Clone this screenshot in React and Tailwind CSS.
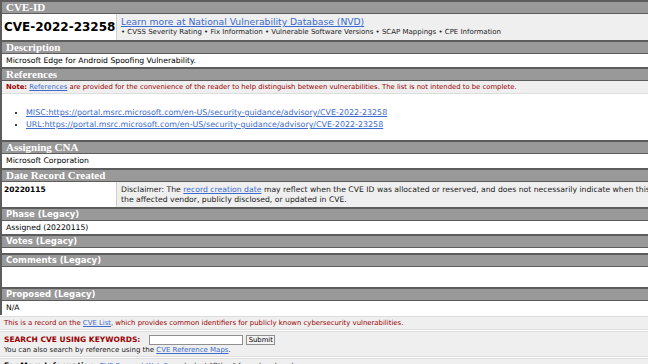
const sans = "font-['DejaVu_Sans',Verdana,sans-serif]";

function Head({ children, serif }) {
  return (
    <div
      className={
        serif
          ? "h-[14px] border-t-2 border-b border-[#5c5c5c] bg-[#999999] pl-[4px] font-['Liberation_Serif',serif] text-[11px] font-bold leading-[11px] text-white"
          : "h-[14px] border-t-2 border-b border-[#5c5c5c] bg-[#999999] pl-[4px] font-['DejaVu_Sans',sans-serif] text-[8.5px] font-bold leading-[11px] text-white"
      }
    >
      {children}
    </div>
  );
}

function Row({ children, className = "" }) {
  return <div className={`bg-white pl-[4px] text-[7.7px] text-black ${className}`}>{children}</div>;
}

function A({ children }) {
  return <span className="text-[#3b6ccd] underline">{children}</span>;
}

export default function App() {
  return (
    <div className={`h-[364px] w-[648px] overflow-hidden bg-white ${sans}`}>
      <div className="w-[900px] border-l-2 border-[#5c5c5c]">
        <Head serif>CVE-ID</Head>
        <div className="flex h-[26px]">
          <div className="flex w-[114px] items-center whitespace-nowrap pl-[2px] text-[12px] font-bold leading-none text-black">
            CVE-2022-23258
          </div>
          <div className="flex-1 border-l border-[#d0d0d0] bg-[#efefef] pl-[4px] pt-[2px]">
            <div className="text-[9.2px] leading-[12px] text-[#3b6ccd] underline">
              Learn more at National Vulnerability Database (NVD)
            </div>
            <div className="text-[7px] leading-[9px] text-[#222]">
              • CVSS Severity Rating • Fix Information • Vulnerable Software Versions • SCAP Mappings • CPE Information
            </div>
          </div>
        </div>

        <Head serif>Description</Head>
        <Row className="h-[13px] leading-[13px]">Microsoft Edge for Android Spoofing Vulnerability.</Row>

        <Head serif>References</Head>
        <div className="h-[13px] border-b border-[#dddddd] bg-[#efefef] pl-[4px] text-[6.85px] leading-[13px] text-[#990000]">
          <b>Note:</b> <A>References</A> are provided for the convenience of the reader to help distinguish between
          vulnerabilities. The list is not intended to be complete.
        </div>
        <div className="h-[46px] bg-white pt-[13px] text-[7.95px] leading-[12px]">
          <ul className="list-disc pl-[24px] marker:text-black">
            <li>
              <A>MISC:https://portal.msrc.microsoft.com/en-US/security-guidance/advisory/CVE-2022-23258</A>
            </li>
            <li>
              <A>URL:https://portal.msrc.microsoft.com/en-US/security-guidance/advisory/CVE-2022-23258</A>
            </li>
          </ul>
        </div>

        <Head serif>Assigning CNA</Head>
        <Row className="h-[14px] leading-[14px]">Microsoft Corporation</Row>

        <Head serif>Date Record Created</Head>
        <div className="flex h-[25px]">
          <div className="w-[114px] pl-[2px] pt-[3px] text-[7.5px] font-bold leading-[10px] text-black">20220115</div>
          <div className="flex-1 whitespace-nowrap border-l border-[#d0d0d0] bg-[#efefef] pl-[4px] pt-[3px] text-[7.7px] leading-[10px] text-[#222]">
            Disclaimer: The <A>record creation date</A> may reflect when the CVE ID was allocated or reserved, and does
            not necessarily indicate when this vulnerability was discovered, shared with
            <br />
            the affected vendor, publicly disclosed, or updated in CVE.
          </div>
        </div>

        <Head>Phase (Legacy)</Head>
        <Row className="h-[13px] leading-[13px]">Assigned (20220115)</Row>

        <Head>Votes (Legacy)</Head>
        <Row className="h-[5px]" />

        <Head>Comments (Legacy)</Head>
        <Row className="h-[20px]" />

        <Head>Proposed (Legacy)</Head>
        <Row className="h-[14px] leading-[14px]">N/A</Row>
      </div>

      <div className="w-[900px]">
        <div className="mt-[1px] h-[14px] border-y border-[#dddddd] bg-[#efefef] pl-[4px] text-[6.9px] leading-[12px] text-[#990000]">
          This is a record on the <A>CVE List</A>, which provides common identifiers for publicly known cybersecurity
          vulnerabilities.
        </div>
        <div className="mt-[1px] h-[26px] border-y border-[#dddddd] bg-[#efefef] pl-[4px] pt-[3px]">
          <div className="flex h-[10px] items-center">
            <span className="text-[7.5px] font-bold text-[#990000]">SEARCH CVE USING KEYWORDS:</span>
            <span className="ml-[9px] h-[10px] w-[94px] border border-[#8f8f8f] bg-white" />
            <span className="ml-[3px] flex h-[10px] w-[29px] items-center justify-center border border-[#8f8f8f] bg-[#f3f3f3] text-[6.8px] text-black">
              Submit
            </span>
          </div>
          <div className="text-[7px] leading-[10px] text-[#222]">
            You can also search by reference using the <A>CVE Reference Maps</A>.
          </div>
        </div>
        <div className="mt-[1px] h-[14px] border-t border-[#dddddd] bg-[#efefef] pl-[4px] text-[7px] leading-[14px] text-[#222]">
          <b className="text-[7.5px] text-black">For More Information:</b> <A>CVE Request Web Form</A> (select "Other"
          from dropdown)
        </div>
      </div>
    </div>
  );
}
